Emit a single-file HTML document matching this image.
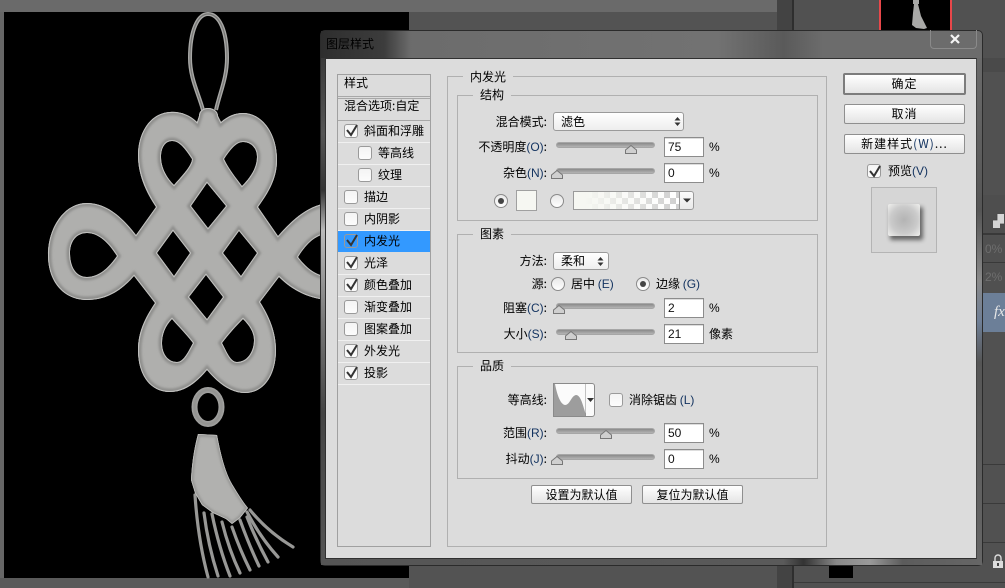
<!DOCTYPE html>
<html lang="zh"><head><meta charset="utf-8">
<style>
html,body{margin:0;padding:0}
body{width:1005px;height:588px;position:relative;overflow:hidden;background:#535353;font:12px/14px "WenQuanYi Zen Hei","Noto Sans CJK SC",sans-serif;color:#000}
div,svg,span.a{position:absolute;box-sizing:border-box}
.t{position:absolute;white-space:nowrap;line-height:14px;font-size:12px;color:#000}
.t b{font-weight:normal;color:#12325f;font-family:"Liberation Sans",sans-serif}
.g{border:1px solid #b0b0b0}
.leg{position:absolute;background:#dcdcdc;padding:0 7px;white-space:nowrap;line-height:14px}
.rl{position:absolute;left:338px;width:92px;height:1px;background:#f0f0f0}
.cb{width:14px;height:14px;border:1px solid #9a9a9a;border-radius:3px;background:linear-gradient(#f4f4f4,#fcfcfc)}
.track{height:6px;width:99px;border-radius:3px;background:linear-gradient(#8a8a8a,#b4b4b4);border:1px solid #a6a6a6}
.inp{width:40px;height:20px;background:#fff;border:1px solid #8c8c8c;box-shadow:inset 0 1px 0 #ddd;font:12px/18px "Liberation Sans",sans-serif;padding-left:3px;color:#111}
.sel{background:linear-gradient(#fff,#eee);border:1px solid #9a9a9a;border-radius:3px}
.btn{background:linear-gradient(#fff,#e4e4e4);border:1px solid #8f8f8f;border-radius:2px;text-align:center;white-space:nowrap;color:#000}
.radio{width:14px;height:14px;border-radius:50%;border:1px solid #8a8a8a;background:linear-gradient(#e8e8e8,#fff)}
.radio.on::after{content:"";position:absolute;left:3px;top:3px;width:6px;height:6px;border-radius:50%;background:#444}
</style></head><body>

<!-- document window background -->
<div style="left:0;top:0;width:777px;height:12px;background:#6a6a6a"></div>
<div style="left:0;top:12px;width:4px;height:576px;background:#666"></div>
<div style="left:0;top:578px;width:777px;height:10px;background:#5a5a5a"></div>
<div style="left:409px;top:12px;width:368px;height:576px;background:#535353"></div>
<div style="left:777px;top:0;width:16px;height:588px;background:#434343"></div>
<div style="left:792px;top:0;width:2px;height:588px;background:#2e2e2e"></div>
<div style="left:794px;top:0;width:211px;height:588px;background:#515151"></div>
<div style="left:879px;top:0;width:73px;height:30px;background:#000;border-left:2px solid #e8474a;border-right:2px solid #e8474a"></div>
<svg style="left:905px;top:0" width="26" height="30" viewBox="0 0 26 30"><path d="M8 0h6v4h-6zM9 4h4l3 12 6 12-3 1-8-1-4-3 1-12z" fill="#a9a9a7"/></svg>
<div style="left:983px;top:58px;width:22px;height:14px;background:#4a4a4a"></div>
<div style="left:983px;top:195px;width:22px;height:40px;background:#4e4e4e;border-bottom:2px solid #393939"></div>
<div style="left:983px;top:236px;width:22px;height:27px;background:#505050;border-bottom:1px solid #393939"></div>
<div style="left:983px;top:264px;width:22px;height:29px;background:#505050"></div>
<div style="left:983px;top:293px;width:22px;height:39px;background:#6c7f98"></div>
<div style="left:983px;top:464px;width:22px;height:1px;background:#3a3a3a"></div>
<div style="left:983px;top:503px;width:22px;height:1px;background:#3a3a3a"></div>
<div style="left:983px;top:542px;width:22px;height:1px;background:#3a3a3a"></div>
<span class="t" style="left:985px;top:242px;color:#6e6e6e;font-family:'Liberation Sans',sans-serif;font-size:12px">0%</span>
<span class="t" style="left:985px;top:270px;color:#6e6e6e;font-family:'Liberation Sans',sans-serif;font-size:12px">2%</span>
<span class="t" style="left:994px;top:305px;color:#e8e8e8;font:italic 15px/14px 'Liberation Serif',serif">fx</span>
<svg style="left:992px;top:213px" width="13" height="16" viewBox="0 0 13 16"><path d="M5 1h7v10H8v4H1V7h4z" fill="#d6d6d6"/><path d="M5 1v6H1M8 11h4" stroke="#444" stroke-width=".8" fill="none"/></svg>
<svg style="left:992px;top:554px" width="13" height="15" viewBox="0 0 13 15"><path d="M3 7V4a3 3 0 0 1 6 0v3" fill="none" stroke="#ddd" stroke-width="1.4"/><path d="M1 7h10v7H1z" fill="#ddd"/><path d="M5 9h2v3H5z" fill="#444"/></svg>
<div style="left:829px;top:566px;width:24px;height:12px;background:#000"></div>
<div style="left:794px;top:582px;width:211px;height:1px;background:#3a3a3a"></div>

<!-- canvas -->
<div style="left:4px;top:12px;width:405px;height:566px;background:#000"></div>
<svg style="left:0;top:0" width="410" height="588" viewBox="0 0 410 588">
<defs>
<path id="k" fill-rule="evenodd" d="M208 108C203 108 199 111 199 116L197 122C190 115 180 111 170 112C150 113 138 133 138 155C138 175 146 192 156 207L136 235C123 218 107 203 87 203C64 203 48 228 48 255C48 282 64 300 87 300C107 300 122 290 134 276L155 303C145 318 138 332 138 350C138 375 150 392 170 392C185 392 197 382 207 370C217 382 230 393 245 393C264 393 276 375 276 350C276 332 269 316 260 302L279 277C292 290 310 300 332 300C350 300 365 280 365 253C365 226 350 203 332 203C310 203 292 220 278 236L258 207C269 192 277 178 277 160C277 133 262 113 243 113C235 113 228 116 221 122L218 116C218 111 213 108 208 108Z
M172 141C165 141 161 148 161 157C161 168 167 178 174 185C180 178 192 166 192 159C186 150 180 141 172 141Z
M243 142C236 142 230 150 224 159C228 168 236 178 242 186C250 178 257 168 257 157C257 148 251 142 243 142Z
M207 183L191 206L208 228L226 206Z
M173 231L157 253L174 276L190 253Z
M239 231L223 253L241 276L257 253Z
M206 275L189 297L207 319L223 297Z
M87 233C76 233 70 242 70 253C70 267 76 277 87 277C100 277 110 266 117 256C110 245 100 233 87 233Z
M172 319C165 326 162 335 162 343C162 354 168 362 177 362C184 362 189 350 193 343C187 335 178 326 172 319Z
M243 319C236 326 228 335 222 343C226 350 230 362 237 362C247 362 254 352 254 340C254 332 249 325 243 319Z
M298 257C305 266 315 277 332 277C342 277 350 266 350 253C350 242 342 233 332 233C315 233 305 246 298 257Z"/>
<path id="ts" d="M198 434L217 435C220 450 224 470 232 484C238 494 243 502 248 508L240 518L232 524L226 519L213 513L202 505L195 493L191 480C192 460 195 445 198 434Z"/>
<clipPath id="kc"><use href="#k" clip-rule="evenodd"/></clipPath>
<clipPath id="tc"><use href="#ts"/></clipPath>
<filter id="b1" x="-5%" y="-5%" width="110%" height="110%"><feGaussianBlur stdDeviation="1"/></filter>
</defs>
<!-- top loop -->
<path d="M203 110C198 92 190 78 190 58C190 30 198 14 208 14C219 14 227 30 227 58C227 78 220 92 216 110" fill="none" stroke="#a8a8a6" stroke-width="4"/>
<path d="M203 110C198 92 190 78 190 58C190 30 198 14 208 14C219 14 227 30 227 58C227 78 220 92 216 110" fill="none" stroke="#777775" stroke-width="1.2"/>
<!-- knot -->
<use href="#k" fill="#afafad"/>
<g clip-path="url(#kc)">
<use href="#k" fill="none" stroke="#8f8f8d" stroke-width="7" filter="url(#b1)"/>
<use href="#k" fill="none" stroke="#c2c2c0" stroke-width="2"/>
</g>
<!-- ring -->
<ellipse cx="208" cy="407" rx="13.5" ry="17" fill="none" stroke="#a2a2a0" stroke-width="6"/>
<ellipse cx="208" cy="407" rx="13.5" ry="17" fill="none" stroke="#8a8a88" stroke-width="2" filter="url(#b1)"/>
<!-- strands -->
<g fill="none" stroke="#989896" stroke-width="3.2" stroke-linecap="round">
<path d="M195 495Q198 540 208 577"/>
<path d="M204 513Q208 545 218 576"/>
<path d="M212 514Q219 548 230 576"/>
<path d="M222 522Q229 550 240 573"/>
<path d="M232 527Q240 550 250 570"/>
<path d="M240 520Q249 545 259 566"/>
<path d="M247 517Q256 540 268 562"/>
<path d="M247 512Q260 537 278 557"/>
<path d="M250 510Q268 532 293 547"/>
</g>
<!-- tassel -->
<use href="#ts" fill="#b1b1af"/>
<g clip-path="url(#tc)">
<use href="#ts" fill="none" stroke="#989896" stroke-width="5" filter="url(#b1)"/>
<use href="#ts" fill="none" stroke="#c0c0be" stroke-width="1.6"/>
</g>
</svg>

<!-- dialog frame -->
<div style="left:320px;top:30px;width:663px;height:536px;border-radius:5px;border:1px solid #2b2b2b;background:linear-gradient(90deg,#555 0,#6c6c6c 14%,#727272 60%,#5a5a5a 70%,#6c6c6c 76%,#6c6c6c 100%)"></div>
<div style="left:321px;top:31px;width:90px;height:27px;background:linear-gradient(90deg,#2e2e2e,#3c3c3c 70%,#6c6c6c)"></div>
<div style="left:321px;top:58px;width:4px;height:507px;background:linear-gradient(#3a3a3a 0,#555 15%,#333 26%,#bbb 34%,#777 52%,#444 70%,#555 100%)"></div>
<div style="left:977px;top:58px;width:5px;height:507px;background:linear-gradient(#6a6a6a,#555 30%,#8a8a8a 44%,#6f7f96 52%,#555 60%,#666)"></div>
<div style="left:321px;top:559px;width:661px;height:6px;background:linear-gradient(90deg,#555,#5a5a5a 70%,#333 73%,#888 78%,#9a9a9a 83%,#5c5c5c 88%,#666)"></div>
<div style="left:325px;top:58px;width:652px;height:501px;background:#dcdcdc;border:1px solid #303030;border-right-color:#444"></div>
<span class="t" style="left:326px;top:37px;color:#000">图层样式</span>
<div style="left:930px;top:30px;width:47px;height:19px;border:1px solid #8a8a8a;border-top:none;border-radius:0 0 4px 4px"></div>
<svg style="left:949px;top:34px" width="12" height="10" viewBox="0 0 12 10"><path d="M2 1l8 8M10 1L2 9" stroke="#f4f4f4" stroke-width="2.2"/></svg>

<!-- left style list -->
<div style="left:337px;top:74px;width:94px;height:473px;border:1px solid #a0a0a0"></div>
<div class="rl" style="top:96px;background:#a8a8a8"></div>
<div class="rl" style="top:98px;background:#a8a8a8"></div>
<div class="rl" style="top:120px;background:#a8a8a8"></div>
<span class="t" style="left:344px;top:76px">样式</span>
<span class="t" style="left:344px;top:99px">混合选项:自定</span>
<div class="rl" style="top:142px"></div><div class="rl" style="top:164px"></div><div class="rl" style="top:186px"></div><div class="rl" style="top:208px"></div><div class="rl" style="top:230px"></div><div class="rl" style="top:274px"></div><div class="rl" style="top:296px"></div><div class="rl" style="top:318px"></div><div class="rl" style="top:340px"></div><div class="rl" style="top:362px"></div><div class="rl" style="top:384px"></div>
<div style="left:338px;top:231px;width:92px;height:21px;background:#3399ff"></div>

<div class="cb" style="left:344px;top:124px"></div>
<div class="cb" style="left:358px;top:146px"></div>
<div class="cb" style="left:358px;top:168px"></div>
<div class="cb" style="left:344px;top:190px"></div>
<div class="cb" style="left:344px;top:212px"></div>
<div class="cb" style="left:344px;top:234px;background:#3399ff"></div>
<div class="cb" style="left:344px;top:256px"></div>
<div class="cb" style="left:344px;top:278px"></div>
<div class="cb" style="left:344px;top:300px"></div>
<div class="cb" style="left:344px;top:322px"></div>
<div class="cb" style="left:344px;top:344px"></div>
<div class="cb" style="left:344px;top:366px"></div>
<svg style="left:344px;top:120px" width="16" height="262" viewBox="0 0 16 262" fill="none" stroke="#333" stroke-width="2"><path d="M3 10l4 5 6-10"/><path d="M3 120l4 5 6-10"/><path d="M3 142l4 5 6-10"/><path d="M3 164l4 5 6-10"/><path d="M3 230l4 5 6-10"/><path d="M3 252l4 5 6-10"/></svg>

<span class="t" style="left:364px;top:124px">斜面和浮雕</span>
<span class="t" style="left:378px;top:146px">等高线</span>
<span class="t" style="left:378px;top:168px">纹理</span>
<span class="t" style="left:364px;top:190px">描边</span>
<span class="t" style="left:364px;top:212px">内阴影</span>
<span class="t" style="left:364px;top:234px">内发光</span>
<span class="t" style="left:364px;top:256px">光泽</span>
<span class="t" style="left:364px;top:278px">颜色叠加</span>
<span class="t" style="left:364px;top:300px">渐变叠加</span>
<span class="t" style="left:364px;top:322px">图案叠加</span>
<span class="t" style="left:364px;top:344px">外发光</span>
<span class="t" style="left:364px;top:366px">投影</span>

<!-- groups -->
<div class="g" style="left:447px;top:76px;width:380px;height:471px"></div>
<span class="leg" style="left:463px;top:70px">内发光</span>
<div class="g" style="left:457px;top:95px;width:361px;height:126px"></div>
<span class="leg" style="left:473px;top:88px">结构</span>
<div class="g" style="left:457px;top:234px;width:361px;height:119px"></div>
<span class="leg" style="left:473px;top:227px">图素</span>
<div class="g" style="left:457px;top:366px;width:361px;height:113px"></div>
<span class="leg" style="left:473px;top:359px">品质</span>

<!-- structure -->
<span class="t" style="right:458px;top:115px">混合模式:</span>
<div class="sel" style="left:553px;top:112px;width:131px;height:19px"></div>
<span class="t" style="left:561px;top:115px">滤色</span>
<svg style="left:674px;top:116px" width="7" height="11" viewBox="0 0 7 11"><path d="M3.5 1L6.5 4.500H.5zM3.500 10L.5 6.500h6z" fill="#333"/></svg>

<span class="t" style="right:458px;top:140px">不透明度<b>(O)</b>:</span>
<div class="track" style="left:556px;top:142px"></div>
<svg style="left:625px;top:145px" width="12" height="9" viewBox="0 0 12 9"><path d="M6 .5L11.500 5V8.500H.5V5z" fill="#cfcfcf" stroke="#777"/></svg>
<div class="inp" style="left:664px;top:137px">75</div>
<span class="t" style="left:709px;top:140px;font-family:'Liberation Sans',sans-serif">%</span>

<span class="t" style="right:458px;top:166px">杂色<b>(N)</b>:</span>
<div class="track" style="left:556px;top:168px"></div>
<svg style="left:551px;top:170px" width="12" height="9" viewBox="0 0 12 9"><path d="M6 .5L11.500 5V8.500H.5V5z" fill="#cfcfcf" stroke="#777"/></svg>
<div class="inp" style="left:664px;top:163px">0</div>
<span class="t" style="left:709px;top:166px;font-family:'Liberation Sans',sans-serif">%</span>

<div class="radio on" style="left:494px;top:194px"></div>
<div style="left:516px;top:190px;width:21px;height:21px;background:#f6f7f2;border:1px solid #a0a0a0"></div>
<div class="radio" style="left:550px;top:194px"></div>
<div style="left:573px;top:191px;width:121px;height:19px;border:1px solid #9a9a9a;border-radius:0 3px 3px 0;background:linear-gradient(#fbfbfb,#eaeaea)"></div>
<div style="left:574px;top:192px;width:105px;height:17px;background:repeating-conic-gradient(#cfcfcf 0 25%,#fff 0 50%) 0 0/12px 12px"></div>
<div style="left:574px;top:192px;width:105px;height:17px;background:linear-gradient(90deg,#f6f7f2,#f6f7f2 10%,rgba(246,247,242,0))"></div>
<div style="left:679px;top:192px;width:1px;height:17px;background:#9a9a9a"></div>
<svg style="left:683px;top:198px" width="8" height="5" viewBox="0 0 8 5"><path d="M0 .5h8L4 4.500z" fill="#333"/></svg>

<!-- elements -->
<span class="t" style="right:458px;top:254px">方法:</span>
<div class="sel" style="left:553px;top:252px;width:56px;height:18px"></div>
<span class="t" style="left:561px;top:254px">柔和</span>
<svg style="left:597px;top:256px" width="7" height="11" viewBox="0 0 7 11"><path d="M3.500 1L6.500 4.500H.5zM3.500 10L.5 6.500h6z" fill="#333"/></svg>
<span class="t" style="right:458px;top:277px">源:</span>
<div class="radio" style="left:551px;top:277px"></div>
<span class="t" style="left:571px;top:277px">居中 <b>(E)</b></span>
<div class="radio on" style="left:636px;top:277px"></div>
<span class="t" style="left:656px;top:277px">边缘 <b>(G)</b></span>

<span class="t" style="right:458px;top:301px">阻塞<b>(C)</b>:</span>
<div class="track" style="left:556px;top:303px"></div>
<svg style="left:553px;top:305px" width="12" height="9" viewBox="0 0 12 9"><path d="M6 .5L11.500 5V8.500H.5V5z" fill="#cfcfcf" stroke="#777"/></svg>
<div class="inp" style="left:664px;top:298px">2</div>
<span class="t" style="left:709px;top:301px;font-family:'Liberation Sans',sans-serif">%</span>

<span class="t" style="right:458px;top:327px">大小<b>(S)</b>:</span>
<div class="track" style="left:556px;top:329px"></div>
<svg style="left:565px;top:331px" width="12" height="9" viewBox="0 0 12 9"><path d="M6 .5L11.500 5V8.500H.5V5z" fill="#cfcfcf" stroke="#777"/></svg>
<div class="inp" style="left:664px;top:324px">21</div>
<span class="t" style="left:709px;top:327px">像素</span>

<!-- quality -->
<span class="t" style="right:458px;top:393px">等高线:</span>
<div style="left:553px;top:383px;width:42px;height:34px;background:#fbfbfb;border:1px solid #8a8a8a;border-radius:0 3px 3px 0"></div>
<svg style="left:554px;top:384px" width="32" height="32" viewBox="0 0 32 32"><path d="M1 0C3 10 6 20 11 21C16 21 17 12 22 11C27 11 29 22 32 31V32H0V0z" fill="#9d9d9d"/><path d="M32 0v32" stroke="#8a8a8a"/></svg>
<svg style="left:587px;top:398px" width="7" height="4" viewBox="0 0 7 4"><path d="M0 0h7L3.500 4z" fill="#333"/></svg>
<div class="cb" style="left:609px;top:393px"></div>
<span class="t" style="left:629px;top:393px">消除锯齿 <b>(L)</b></span>

<span class="t" style="right:458px;top:426px">范围<b>(R)</b>:</span>
<div class="track" style="left:556px;top:428px"></div>
<svg style="left:600px;top:430px" width="12" height="9" viewBox="0 0 12 9"><path d="M6 .5L11.500 5V8.500H.5V5z" fill="#cfcfcf" stroke="#777"/></svg>
<div class="inp" style="left:664px;top:423px">50</div>
<span class="t" style="left:709px;top:426px;font-family:'Liberation Sans',sans-serif">%</span>

<span class="t" style="right:458px;top:452px">抖动<b>(J)</b>:</span>
<div class="track" style="left:556px;top:454px"></div>
<svg style="left:551px;top:456px" width="12" height="9" viewBox="0 0 12 9"><path d="M6 .5L11.500 5V8.500H.5V5z" fill="#cfcfcf" stroke="#777"/></svg>
<div class="inp" style="left:664px;top:449px">0</div>
<span class="t" style="left:709px;top:452px;font-family:'Liberation Sans',sans-serif">%</span>

<div class="btn" style="left:531px;top:485px;width:101px;height:19px;line-height:17px">设置为默认值</div>
<div class="btn" style="left:642px;top:485px;width:101px;height:19px;line-height:17px">复位为默认值</div>

<!-- right column -->
<div class="btn" style="left:843px;top:73px;width:123px;height:22px;border:2px solid #7c7c7c;line-height:18px;letter-spacing:1px">确定</div>
<div class="btn" style="left:844px;top:104px;width:121px;height:20px;line-height:18px;letter-spacing:1px">取消</div>
<div class="btn" style="left:844px;top:134px;width:121px;height:20px;line-height:18px;letter-spacing:1px">新建样式<b style="font-weight:normal;color:#12325f">(W)</b>...</div>
<div class="cb" style="left:867px;top:164px"></div>
<svg style="left:867px;top:163px" width="16" height="16" viewBox="0 0 16 16" fill="none" stroke="#333" stroke-width="2"><path d="M3 8l4 5 6-10"/></svg>
<span class="t" style="left:888px;top:164px">预览<b>(V)</b></span>
<div style="left:871px;top:187px;width:66px;height:66px;background:#d6d6d6;border:1px solid #b4b4b4"></div>
<div style="left:890px;top:207px;width:33px;height:33px;border-radius:2px;background:#3e3e3e;filter:blur(2px);opacity:.75"></div>
<div style="left:888px;top:204px;width:32px;height:32px;border-radius:2px;background:radial-gradient(circle,#b4b4b4 0,#c0c0c0 35%,#cbcbcb 60%,#f0f0ee 100%)"></div>

</body></html>
